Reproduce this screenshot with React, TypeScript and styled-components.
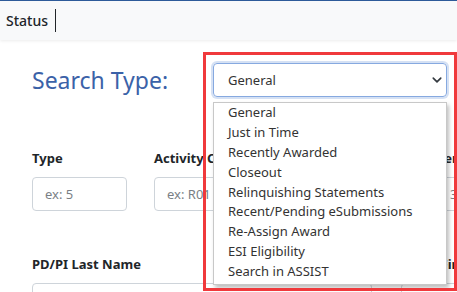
import styled, { createGlobalStyle } from "styled-components";

const GlobalStyle = createGlobalStyle`
  html, body {
    margin: 0;
    padding: 0;
    background: #ffffff;
    font-family: "Noto Sans", "Open Sans", sans-serif;
    overflow: hidden;
  }
  * { box-sizing: border-box; }
`;

const Page = styled.div`
  width: 457px;
  height: 292px;
  position: relative;
  overflow: hidden;
`;

const NavBar = styled.div`
  height: 40px;
  border-top: 1px solid #2d5a99;
  background: #f8f9fa;
  box-shadow: 0 1px 3px rgba(0, 0, 0, 0.08);
  display: flex;
  align-items: center;
  padding-left: 6px;
`;

const NavItem = styled.span`
  font-size: 14px;
  font-weight: 500;
  color: #212529;
  padding-right: 7px;
  border-right: 1px solid #212529;
  line-height: 23px;
`;

const Content = styled.div`
  padding: 0 0 0 32px;
`;

const SearchRow = styled.div`
  display: flex;
  align-items: center;
  height: 78px;
  padding-top: 2px;
`;

const Title = styled.h2`
  margin: 0;
  width: 181px;
  font-size: 23px;
  font-weight: 400;
  color: #3b62a8;
`;

const SelectWrap = styled.div`
  position: relative;
  width: 234px;
`;

const SelectBox = styled.div`
  height: 34px;
  border: 1px solid #86a9e0;
  border-radius: 4px;
  box-shadow: 0 0 0 2px rgba(134, 169, 224, 0.35);
  display: flex;
  align-items: center;
  justify-content: space-between;
  padding: 0 4px 0 14px;
  font-size: 13px;
  color: #333;
`;

const Options = styled.ul`
  position: absolute;
  top: 39px;
  left: 0;
  width: 234px;
  margin: 0;
  padding: 0 0 2px;
  list-style: none;
  background: #fff;
  border: 1px solid #c8c8c8;
  box-shadow: 2px 3px 4px rgba(0, 0, 0, 0.25);
  z-index: 5;
`;

const Option = styled.li`
  height: 19.9px;
  line-height: 19.9px;
  padding-left: 14px;
  font-size: 13px;
  color: #333;
  white-space: nowrap;
`;

const Highlight = styled.div`
  position: absolute;
  left: 203px;
  top: 52px;
  width: 254px;
  height: 239px;
  border: 3px solid #f0393c;
  z-index: 6;
  pointer-events: none;
`;

const FieldRow = styled.div<{ $cols: string; $gap: number; $top: number }>`
  display: grid;
  grid-template-columns: ${(p) => p.$cols};
  column-gap: ${(p) => p.$gap}px;
  margin-top: ${(p) => p.$top}px;
`;

const Field = styled.div`
  display: flex;
  flex-direction: column;
  white-space: nowrap;
`;

const Label = styled.label`
  font-size: 13px;
  font-weight: 700;
  color: #212529;
  height: 20px;
  line-height: 20px;
  margin-bottom: 9px;
`;

const Input = styled.div`
  height: 34px;
  border: 1px solid #ced4da;
  border-radius: 4px;
  padding-left: 12px;
  display: flex;
  align-items: center;
  font-size: 13px;
  color: #7a7f85;
`;

const items = [
  "General",
  "Just in Time",
  "Recently Awarded",
  "Closeout",
  "Relinquishing Statements",
  "Recent/Pending eSubmissions",
  "Re-Assign Award",
  "ESI Eligibility",
  "Search in ASSIST",
];

export default function App() {
  return (
    <Page>
      <GlobalStyle />
      <NavBar>
        <NavItem>Status</NavItem>
      </NavBar>
      <Content>
        <SearchRow>
          <Title>Search Type:</Title>
          <SelectWrap>
            <SelectBox>
              <span>General</span>
              <svg width="10" height="10" viewBox="0 0 16 16">
                <path d="M2 5l6 6 6-6" fill="none" stroke="#343a40" strokeWidth="2.6" strokeLinecap="round" strokeLinejoin="round" />
              </svg>
            </SelectBox>
            <Options>
              {items.map((t) => (
                <Option key={t}>{t}</Option>
              ))}
            </Options>
          </SelectWrap>
        </SearchRow>
        <FieldRow $cols="95px 115px 114px 110px" $gap={27} $top={30}>
          <Field>
            <Label>Type</Label>
            <Input>ex: 5</Input>
          </Field>
          <Field>
            <Label>Activity Code</Label>
            <Input>ex: R01</Input>
          </Field>
          <Field>
            <Label>Institute Code</Label>
            <Input>ex: CA</Input>
          </Field>
          <Field>
            <Label>Serial</Label>
            <Input>3</Input>
          </Field>
        </FieldRow>
        <FieldRow $cols="340px 200px" $gap={29} $top={43}>
          <Field>
            <Label>PD/PI Last Name</Label>
            <Input />
          </Field>
          <Field>
            <Label>PD/PI First Name</Label>
            <Input />
          </Field>
        </FieldRow>
      </Content>
      <Highlight />
    </Page>
  );
}
